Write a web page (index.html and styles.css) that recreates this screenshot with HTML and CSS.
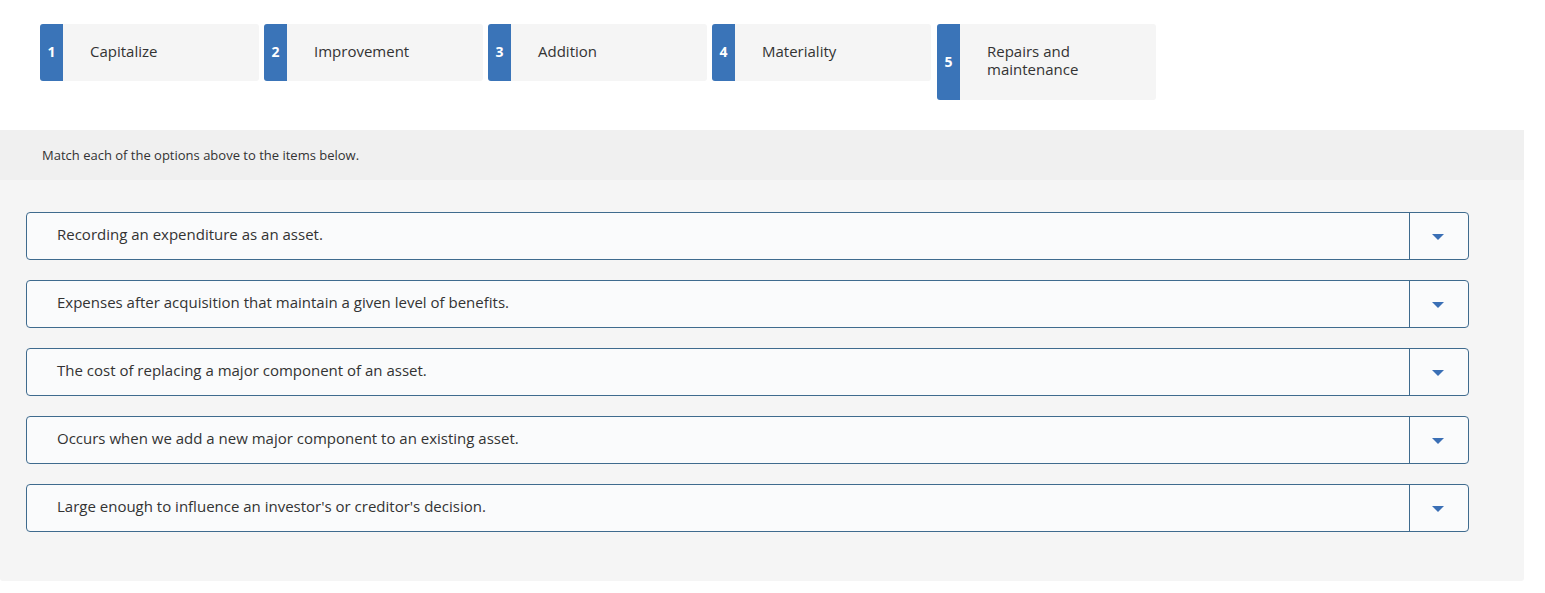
FILE: index.html
```html
<!DOCTYPE html>
<html>
<head>
<meta charset="utf-8">
<link rel="stylesheet" href="styles.css">
</head>
<body>
<div class="page">
  <div class="tiles">
    <div class="tile"><div class="num">1</div><div class="label">Capitalize</div></div>
    <div class="tile"><div class="num">2</div><div class="label">Improvement</div></div>
    <div class="tile"><div class="num">3</div><div class="label">Addition</div></div>
    <div class="tile"><div class="num">4</div><div class="label">Materiality</div></div>
    <div class="tile tall"><div class="num">5</div><div class="label">Repairs and<br>maintenance</div></div>
  </div>
  <div class="panel">
    <div class="instr">Match each of the options above to the items below.</div>
    <div class="rows">
      <div class="row"><div class="text">Recording an expenditure as an asset.</div><div class="drop"><span class="caret"></span></div></div>
      <div class="row"><div class="text">Expenses after acquisition that maintain a given level of benefits.</div><div class="drop"><span class="caret"></span></div></div>
      <div class="row"><div class="text">The cost of replacing a major component of an asset.</div><div class="drop"><span class="caret"></span></div></div>
      <div class="row"><div class="text">Occurs when we add a new major component to an existing asset.</div><div class="drop"><span class="caret"></span></div></div>
      <div class="row"><div class="text">Large enough to influence an investor's or creditor's decision.</div><div class="drop"><span class="caret"></span></div></div>
    </div>
  </div>
</div>
</body>
</html>
```
FILE: styles.css
```css
html, body {
  margin: 0;
  padding: 0;
  background: #ffffff;
}
body {
  font-family: "Open Sans", "Liberation Sans", sans-serif;
  color: #333333;
}
.page {
  width: 1524px;
}
.tiles {
  display: flex;
  align-items: flex-start;
  gap: 5px;
  padding: 24px 0 0 40px;
  height: 130px;
  box-sizing: border-box;
}
.tile {
  display: flex;
  width: 219px;
  height: 57px;
  background: #f5f5f5;
  border-radius: 3px;
}
.tile.tall {
  height: 76px;
  margin-left: 1px;
}
.num {
  width: 23px;
  flex: none;
  background: #3a74b8;
  color: #ffffff;
  font-weight: 700;
  font-size: 14px;
  display: flex;
  align-items: center;
  justify-content: center;
  padding-bottom: 2px;
  box-sizing: border-box;
  border-radius: 3px 0 0 3px;
}
.label {
  display: flex;
  align-items: center;
  padding-left: 27px;
  padding-bottom: 4px;
  font-size: 15px;
  line-height: 18px;
  color: #333;
}
.panel {
  background: #f5f5f5;
  height: 451px;
  border-radius: 0 0 3px 3px;
}
.instr {
  background: #f0f0f0;
  height: 50px;
  display: flex;
  align-items: center;
  padding-left: 42px;
  font-size: 13px;
  color: #333;
}
.rows {
  display: flex;
  flex-direction: column;
  gap: 20px;
  padding: 32px 0 0 26px;
}
.row {
  display: flex;
  width: 1443px;
  height: 48px;
  box-sizing: border-box;
  border: 1px solid #3f6b8e;
  border-radius: 4px;
  background: #fafbfc;
}
.text {
  flex: 1;
  display: flex;
  align-items: center;
  padding-left: 30px;
  padding-bottom: 4px;
  font-size: 15px;
  color: #333;
  border-right: 1px solid #3f6b8e;
}
.drop {
  width: 58px;
  display: flex;
  align-items: center;
  justify-content: center;
  padding-right: 2px;
  box-sizing: border-box;
}
.caret {
  width: 0;
  height: 0;
  border-left: 6px solid transparent;
  border-right: 6px solid transparent;
  border-top: 6px solid #3a6fb5;
  margin-top: 2px;
}
```
